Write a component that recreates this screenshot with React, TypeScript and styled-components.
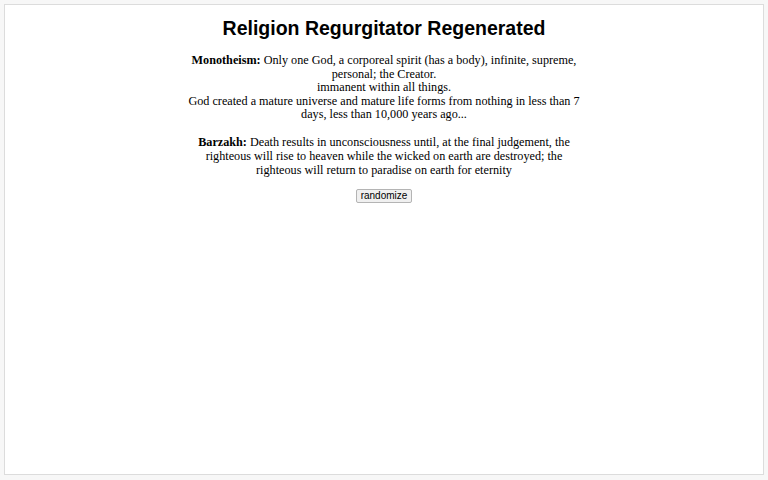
import * as React from 'react'
import styled, { createGlobalStyle } from 'styled-components'

const GlobalStyle = createGlobalStyle`
  html, body {
    margin: 0;
    padding: 0;
    background: #f7f7f7;
  }
  body {
    padding: 4px;
    height: 480px;
    box-sizing: border-box;
  }
`

const Page = styled.div`
  box-sizing: border-box;
  height: 471px;
  background: #ffffff;
  border: 1px solid #dcdcdc;
  display: flex;
  flex-direction: column;
  align-items: center;
  padding-top: 11px;
`

const Title = styled.h1`
  font-family: 'Liberation Sans', Arial, sans-serif;
  font-size: 19.5px;
  font-weight: bold;
  color: #000;
  margin: 0 0 14px 0;
  line-height: 24px;
`

const Tenet = styled.p`
  width: 400px;
  margin: 0 0 14.5px 0;
  font-family: 'Liberation Serif', 'Times New Roman', serif;
  font-size: 12.2px;
  line-height: 13.6px;
  text-align: center;
  color: #000;
`

const Label = styled.b`
  font-weight: bold;
`

const Button = styled.button`
  font-family: 'Liberation Sans', Arial, sans-serif;
  font-size: 10px;
  color: #000;
  background: #f0f0f0;
  border: 1px solid #b4b4b4;
  border-radius: 2px;
  padding: 0 4px;
  height: 14px;
  line-height: 12px;
  margin-top: -3px;
`

export default function App() {
  return (
    <>
      <GlobalStyle />
      <Page>
        <Title>Religion Regurgitator Regenerated</Title>
        <Tenet>
          <Label>Monotheism:</Label> Only one God, a corporeal spirit (has a body), infinite, supreme,
          personal; the Creator.
          <br />
          immanent within all things.
          <br />
          God created a mature universe and mature life forms from nothing in less than 7 days, less
          than 10,000 years ago...
        </Tenet>
        <Tenet>
          <Label>Barzakh:</Label> Death results in unconsciousness until, at the final judgement, the
          righteous will rise to heaven while the wicked on earth are destroyed; the righteous will
          return to paradise on earth for eternity
        </Tenet>
        <Button>randomize</Button>
      </Page>
    </>
  )
}
